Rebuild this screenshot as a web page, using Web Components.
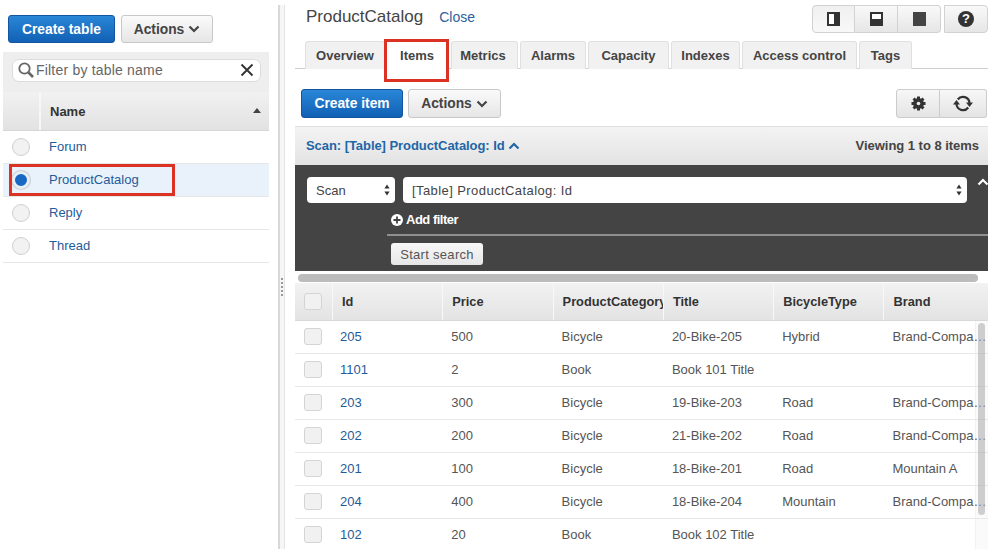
<!DOCTYPE html>
<html>
<head>
<meta charset="utf-8">
<title>ProductCatalog</title>
<style>
  html, body { margin: 0; height: 100%; overflow: hidden; background: #fff; }
  body { font-family: "Liberation Sans", Arial, sans-serif; font-size: 13px; color: #444; }
</style>
</head>
<body>

<aws-console>
  <aws-sidebar slot="side">
    <aws-toolbar>
      <aws-button primary style="width:107px">Create table</aws-button>
      <aws-button caret style="width:92px">Actions</aws-button>
    </aws-toolbar>
    <aws-filter></aws-filter>
    <aws-table-list></aws-table-list>
  </aws-sidebar>
  <aws-splitter slot="split"></aws-splitter>
  <aws-detail slot="main">
    <aws-title-bar></aws-title-bar>
    <aws-tabs></aws-tabs>
    <aws-item-tools></aws-item-tools>
    <aws-scan-header></aws-scan-header>
    <aws-scan-panel></aws-scan-panel>
    <aws-items-table></aws-items-table>
  </aws-detail>
</aws-console>

<script>
  const FONT = '"Liberation Sans", Arial, sans-serif';
  const CHEVRON_DOWN = '<svg width="12" height="8" viewBox="0 0 12 8"><path d="M1.5 1.5 6 6l4.5-4.5" fill="none" stroke="currentColor" stroke-width="2.2"/></svg>';
  const CHEVRON_UP = '<svg width="12" height="8" viewBox="0 0 12 8"><path d="M1.5 6.5 6 2l4.5 4.5" fill="none" stroke="currentColor" stroke-width="2.2"/></svg>';
  const SPINNER = '<svg width="6" height="12" viewBox="0 0 6 12"><path d="M3 0.5 5.6 4.5H.4zM3 11.5.4 7.5h5.2z" fill="#333"/></svg>';

  // small helper, every element here is just a style + markup in an open shadow root
  function define(name, html) {
    customElements.define(name, class extends HTMLElement {
      constructor() {
        super();
        this.attachShadow({ mode: 'open' }).innerHTML = html;
      }
    });
  }

  define('aws-console', `
    <style>
      :host { display: flex; height: 549px; width: 1000px; overflow: hidden; }
      .side { flex: 0 0 278px; }
      .split { flex: 0 0 7px; }
      .main { flex: 1; min-width: 0; }
    </style>
    <div class="side"><slot name="side"></slot></div>
    <div class="split"><slot name="split"></slot></div>
    <div class="main"><slot name="main"></slot></div>`);

  class AwsButton extends HTMLElement {
    constructor() {
      super();
      const caret = this.hasAttribute('caret') ? CHEVRON_DOWN : '';
      this.attachShadow({ mode: 'open' }).innerHTML = `
        <style>
          :host {
            display: inline-flex; align-items: center; justify-content: center; gap: 4px;
            box-sizing: border-box; height: 28px;
            font: bold 13.8px ${FONT}; color: #444; white-space: nowrap;
            background: linear-gradient(#fafafa, #e6e6e6);
            border: 1px solid #c8c8c8; border-radius: 3px;
          }
          :host([primary]) {
            color: #fff; border-color: #15559f;
            background: linear-gradient(#2a86d8, #1161b5);
          }
        </style>
        <slot></slot>${caret}`;
    }
  }
  customElements.define('aws-button', AwsButton);

  define('aws-sidebar', `
    <style>:host { display: block; padding-top: 15px; }</style>
    <slot></slot>`);

  define('aws-toolbar', `
    <style>:host { display: flex; gap: 6px; padding-left: 8px; margin-bottom: 9px; }</style>
    <slot></slot>`);

  define('aws-filter', `
    <style>
      :host {
        display: block; box-sizing: border-box; width: 266px; height: 40px;
        margin-left: 3px; padding: 7px 8px 0 9px; background: #eeeeee;
      }
      .box {
        display: flex; align-items: center; box-sizing: border-box; height: 23px;
        background: #fff; border: 1px solid #dcdcdc; border-radius: 7px; padding: 0 6px 1px 4px;
        font-size: 14px; color: #666; letter-spacing: .2px;
      }
      svg { flex: none; }
      span { flex: 1; margin-left: 1px; }
    </style>
    <div class="box">
      <svg width="18" height="18" viewBox="0 0 18 18"><circle cx="7.5" cy="7.5" r="5.2" fill="none" stroke="#666" stroke-width="1.8"/><path d="M11.5 11.5 16 16" stroke="#666" stroke-width="2.6"/></svg>
      <span>Filter by table name</span>
      <svg width="14" height="14" viewBox="0 0 14 14"><path d="M1.5 1.5l11 11M12.5 1.5l-11 11" stroke="#333" stroke-width="1.9"/></svg>
    </div>`);

  define('aws-table-list', `
    <style>
      :host { display: block; width: 266px; margin-left: 3px; position: relative; }
      .head {
        display: flex; height: 38px; background: linear-gradient(#f1f1f1, #e2e2e2);
        border-bottom: 1px solid #d6d6d6; font: bold 13px ${FONT}; color: #333;
      }
      .head i { flex: 0 0 36px; border-right: 2px solid #f7f7f7; }
      .head b { flex: 1; padding-left: 9px; line-height: 39px; }
      .head svg { margin: 16px 8px 0 0; }
      .row {
        display: flex; align-items: center; box-sizing: border-box; height: 33px; padding-bottom: 1px;
        border-bottom: 1px solid #e6e6e6; color: #1f5c99;
      }
      .row.on { background: #e9f2fb; }
      .radio {
        flex: none; box-sizing: border-box; width: 18px; height: 18px; margin: 0 19px 0 9px;
        border: 1px solid #cfcfcf; border-radius: 50%; background: #f2f2f2;
      }
      .on .radio { background: #1668c4; border: 3px solid #e8eef5; box-shadow: 0 0 0 1px #ccc; }
      .mark { position: absolute; left: 6px; top: 72px; width: 166px; height: 32px; box-sizing: border-box; border: 3px solid #dc3224; }
    </style>
    <div class="head"><i></i><b>Name</b><svg width="8" height="5" viewBox="0 0 8 5"><path d="M4 0 8 5H0z" fill="#444"/></svg></div>
    <div class="row"><span class="radio"></span>Forum</div>
    <div class="row on"><span class="radio"></span>ProductCatalog</div>
    <div class="row"><span class="radio"></span>Reply</div>
    <div class="row"><span class="radio"></span>Thread</div>
    <div class="mark"></div>`);

  define('aws-splitter', `
    <style>
      :host {
        display: flex; flex-direction: column; align-items: center; gap: 2px;
        box-sizing: border-box; height: 544px; margin-top: 5px; padding-top: 273px;
        border-left: 2px solid #d8d8d8; border-right: 1px solid #e4e4e4; background: #f6f6f6;
      }
      i { width: 2px; height: 2px; background: #999; }
    </style>
    <i></i><i></i><i></i><i></i><i></i>`);

  define('aws-detail', `
    <style>:host { display: block; width: 693px; margin-left: 10px; }</style>
    <slot></slot>`);

  define('aws-title-bar', `
    <style>
      :host { display: flex; align-items: flex-start; height: 41px; }
      h1 { margin: 7px 0 0 11px; font: normal 17px/20px ${FONT}; color: #444; }
      a { margin: 8px 0 0 16px; font-size: 14px; line-height: 18px; color: #2f5f9e; }
      .group { display: flex; margin: 5px 0 0 auto; }
      .btn {
        display: flex; align-items: center; justify-content: center; box-sizing: border-box;
        width: 43px; height: 28px; background: linear-gradient(#f9f9f9, #e6e6e6);
        border: 1px solid #d2d2d2; border-left-width: 0;
      }
      .btn:first-child { border-left-width: 1px; border-radius: 4px 0 0 4px; background: linear-gradient(#f0f0f0, #f8f8f8); }
      .btn:last-child { border-radius: 0 4px 4px 0; }
      .help { width: 44px; margin: 5px 0 0 3px; border-left-width: 1px; border-radius: 4px; }
      .glyph {
        width: 16px; height: 16px; border-radius: 50%; background: #333; color: #fff;
        font: bold 13px/16px ${FONT}; text-align: center;
      }
    </style>
    <h1>ProductCatalog</h1>
    <a>Close</a>
    <div class="group">
      <div class="btn"><svg width="13" height="14" viewBox="0 0 13 14"><path d="M0 0h13v14H0z" fill="#333"/><path d="M2 2h5v10H2z" fill="#fff"/></svg></div>
      <div class="btn"><svg width="13" height="14" viewBox="0 0 13 14"><path d="M0 0h13v14H0z" fill="#333"/><path d="M2 2h9v5H2z" fill="#fff"/></svg></div>
      <div class="btn"><svg width="13" height="14" viewBox="0 0 13 14"><path d="M0 0h13v14H0z" fill="#444"/></svg></div>
    </div>
    <div class="btn help"><span class="glyph">?</span></div>`);

  class AwsTabs extends HTMLElement {
    constructor() {
      super();
      // name, width, extra style for the few tabs whose label sits off centre
      const tabs = [
        ['Overview', 80, 'margin-right:-2px'],
        ['Items', 64, ''],
        ['Metrics', 67, 'padding-right:3px'],
        ['Alarms', 66, ''],
        ['Capacity', 81, ''],
        ['Indexes', 69, ''],
        ['Access control', 115, ''],
        ['Tags', 53, '']
      ];
      this.attachShadow({ mode: 'open' }).innerHTML = `
        <style>
          :host {
            display: flex; gap: 2px; box-sizing: border-box; height: 28px; padding-left: 10px;
            border-bottom: 1px solid #cfcfcf;
          }
          div {
            position: relative; box-sizing: border-box; height: 28px; text-align: center;
            font: bold 13px/28px ${FONT}; color: #444; background: #f1f1f1;
            border: 1px solid #e0e0e0; border-bottom: 0; border-radius: 3px 3px 0 0;
          }
          .on { background: #fff; height: 29px; border-color: transparent; }
          .on::after {
            content: ""; position: absolute; left: -2px; right: -1px; top: -3px; height: 43px;
            border: 3px solid #dc3224; box-sizing: border-box;
          }
        </style>
        ${tabs.map(([t, w, s]) => `<div class="${t === 'Items' ? 'on' : ''}" style="width:${w}px;${s}">${t}</div>`).join('')}`;
    }
  }
  customElements.define('aws-tabs', AwsTabs);

  define('aws-item-tools', `
    <style>
      :host { display: flex; gap: 5px; height: 29px; margin: 20px 1px 8px 6px; }
      aws-button { height: 29px; }
      .group { display: flex; margin-left: auto; }
      .btn {
        display: flex; align-items: center; justify-content: center; box-sizing: border-box;
        height: 29px; width: 44px; background: linear-gradient(#f7f7f7, #e4e4e4);
        border: 1px solid #cccccc; border-radius: 3px 0 0 3px;
      }
      .btn + .btn { width: 47px; border-left: 0; border-radius: 0 3px 3px 0; }
    </style>
    <aws-button primary style="width:102px">Create item</aws-button>
    <aws-button caret style="width:93px">Actions</aws-button>
    <div class="group">
      <div class="btn">
        <svg width="15" height="15" viewBox="0 0 15 15"><g fill="#333"><circle cx="7.5" cy="7.5" r="5.4"/><path d="M6 .5h3v3H6zM6 11.5h3v3H6zM.5 6h3v3h-3zM11.5 6h3v3h-3z"/><path d="M6 .5h3v3H6zM6 11.5h3v3H6zM.5 6h3v3h-3zM11.5 6h3v3h-3z" transform="rotate(45 7.5 7.5)"/></g><circle cx="7.5" cy="7.5" r="1.8" fill="#eee"/></svg>
      </div>
      <div class="btn">
        <svg width="20" height="17" viewBox="0 0 20 17"><g fill="none" stroke="#333" stroke-width="2.2"><path d="M4.8 4.5A6.5 6.5 0 0 1 16.5 8"/><path d="M15.2 12.5A6.5 6.5 0 0 1 3.5 9"/></g><path d="M13 7.5h7L16.5 12zM0 9.5h7L3.5 5z" fill="#333"/></svg>
      </div>
    </div>`);

  define('aws-scan-header', `
    <style>
      :host {
        display: flex; align-items: center; justify-content: space-between; box-sizing: border-box;
        height: 39px; padding: 0 9px 1px 11px; background: linear-gradient(#f3f3f3, #e3e3e3);
        border-top: 1px solid #e0e0e0; font: bold 13px ${FONT};
      }
      .scan { display: flex; align-items: center; gap: 3px; color: #1e66a6; letter-spacing: -.06px; }
      .view { color: #444; letter-spacing: -.03px; }
    </style>
    <span class="scan">Scan: [Table] ProductCatalog: Id ${CHEVRON_UP}</span>
    <span class="view">Viewing 1 to 8 items</span>`);

  define('aws-scan-panel', `
    <style>
      :host { display: block; box-sizing: border-box; height: 106px; padding-top: 12px; background: #444; position: relative; }
      .line { display: flex; gap: 8px; padding-left: 12px; }
      .sel {
        display: flex; align-items: center; justify-content: space-between; box-sizing: border-box;
        height: 26px; padding: 0 5px 0 9px; background: #fff; border-radius: 4px; color: #444; font-size: 13px;
      }
      .one { width: 88px; }
      .two { width: 564px; letter-spacing: .42px; }
      .up { position: absolute; right: 0; top: 13px; width: 11px; overflow: hidden; color: #fff; line-height: 0; }
      .add {
        display: flex; align-items: center; gap: 3px; height: 14px; margin: 10px 0 0 96px;
        font: bold 13px/14px ${FONT}; color: #fff; letter-spacing: -.5px;
      }
      hr { height: 2px; margin: 7px 0 0 92px; border: 0; background: #8f8f8f; }
      .go {
        display: flex; align-items: center; justify-content: center; box-sizing: border-box;
        width: 92px; height: 22px; margin: 7px 0 0 96px; border-radius: 3px;
        background: linear-gradient(#f8f8f8, #e6e6e6); color: #555; font-size: 13px; letter-spacing: .3px;
      }
    </style>
    <div class="line">
      <div class="sel one">Scan ${SPINNER}</div>
      <div class="sel two">[Table] ProductCatalog: Id ${SPINNER}</div>
    </div>
    <div class="up">${CHEVRON_UP}</div>
    <div class="add">
      <svg width="12" height="12" viewBox="0 0 12 12"><circle cx="6" cy="6" r="6" fill="#fff"/><path d="M6 2.5v7M2.5 6h7" stroke="#444" stroke-width="1.8"/></svg>
      Add filter
    </div>
    <hr>
    <div class="go">Start search</div>`);

  class AwsItemsTable extends HTMLElement {
    constructor() {
      super();
      const cols = ['Id', 'Price', 'ProductCategory', 'Title', 'BicycleType', 'Brand'];
      const rows = [
        ['205', '500', 'Bicycle', '20-Bike-205', 'Hybrid', 'Brand-Company A'],
        ['1101', '2', 'Book', 'Book 101 Title', '', ''],
        ['203', '300', 'Bicycle', '19-Bike-203', 'Road', 'Brand-Company A'],
        ['202', '200', 'Bicycle', '21-Bike-202', 'Road', 'Brand-Company A'],
        ['201', '100', 'Bicycle', '18-Bike-201', 'Road', 'Mountain A'],
        ['204', '400', 'Bicycle', '18-Bike-204', 'Mountain', 'Brand-Company A'],
        ['102', '20', 'Book', 'Book 102 Title', '', '']
      ];
      this.attachShadow({ mode: 'open' }).innerHTML = `
        <style>
          :host { display: block; position: relative; height: 278px; overflow: hidden; }
          .hbar { height: 8px; width: 680px; margin: 3px 0 1px 3px; border-radius: 4px; background: #bcbcbc; }
          .row {
            display: grid; grid-template-columns: 37px repeat(5, 110.3px) 1fr; align-items: center;
            box-sizing: border-box; height: 33px; padding-bottom: 1px; border-bottom: 1px solid #e8e8e8;
            position: relative;
          }
          .head {
            height: 38px; padding-bottom: 0; background: linear-gradient(#f2f2f2, #e3e3e3); border-bottom: 1px solid #d8d8d8;
            font: bold 12.8px ${FONT}; color: #333; align-items: stretch;
          }
          .head > div { display: flex; align-items: center; overflow: hidden; white-space: nowrap; padding-left: 9px; border-left: 1px solid #f8f8f8; }
          .head > div:first-child { padding-left: 9px; border-left: 0; }
          .cell { white-space: nowrap; overflow: hidden; text-overflow: ellipsis; padding: 0 10px 0 9px; color: #555; }
          .cell:last-child { padding-right: 1px; }
          .cell.id { color: #1f5c99; padding-left: 8px; }
          .check {
            display: block; box-sizing: border-box; width: 18px; height: 17px; margin-left: 9px;
            background: #f1f1f1; border: 1px solid #d4d4d4; border-radius: 3px;
          }
          .head .check { margin-left: 0; }
          .gutter { position: absolute; right: 0; top: 50px; bottom: 0; width: 12px; background: #fafafa; border-left: 1px solid #f2f2f2; }
          .vbar { position: absolute; right: 3px; top: 52px; width: 7px; height: 192px; border-radius: 4px; background: rgba(175, 175, 175, .6); }
        </style>
        <div class="gutter"></div>
        <div class="hbar"></div>
        <div class="row head">
          <div><span class="check"></span></div>
          ${cols.map(c => `<div>${c}</div>`).join('')}
        </div>
        ${rows.map(r => `<div class="row"><span class="check"></span>${r.map((v, i) => `<div class="cell${i ? '' : ' id'}">${v}</div>`).join('')}</div>`).join('')}
        <div class="vbar"></div>`;
    }
  }
  customElements.define('aws-items-table', AwsItemsTable);
</script>
</body>
</html>
